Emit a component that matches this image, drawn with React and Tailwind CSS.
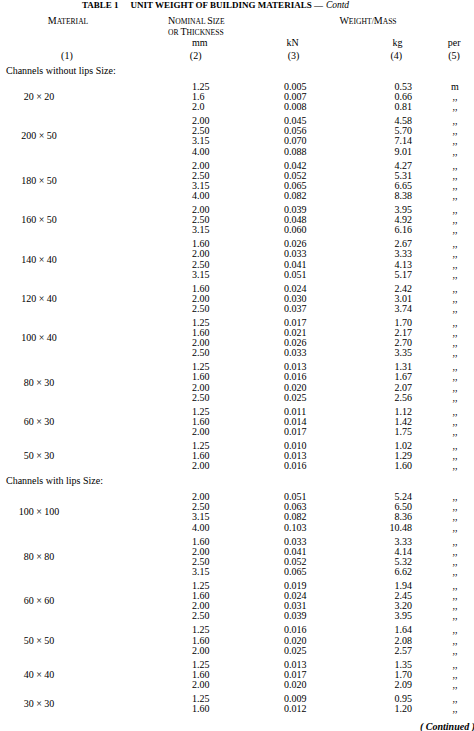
import React from "react";

const s1 = [
  ["20 × 20", [["1.25", "0.005", "0.53", "m"], ["1.6", "0.007", "0.66"], ["2.0", "0.008", "0.81"]]],
  ["200 × 50", [["2.00", "0.045", "4.58"], ["2.50", "0.056", "5.70"], ["3.15", "0.070", "7.14"], ["4.00", "0.088", "9.01"]]],
  ["180 × 50", [["2.00", "0.042", "4.27"], ["2.50", "0.052", "5.31"], ["3.15", "0.065", "6.65"], ["4.00", "0.082", "8.38"]]],
  ["160 × 50", [["2.00", "0.039", "3.95"], ["2.50", "0.048", "4.92"], ["3.15", "0.060", "6.16"]]],
  ["140 × 40", [["1.60", "0.026", "2.67"], ["2.00", "0.033", "3.33"], ["2.50", "0.041", "4.13"], ["3.15", "0.051", "5.17"]]],
  ["120 × 40", [["1.60", "0.024", "2.42"], ["2.00", "0.030", "3.01"], ["2.50", "0.037", "3.74"]]],
  ["100 × 40", [["1.25", "0.017", "1.70"], ["1.60", "0.021", "2.17"], ["2.00", "0.026", "2.70"], ["2.50", "0.033", "3.35"]]],
  ["80 × 30", [["1.25", "0.013", "1.31"], ["1.60", "0.016", "1.67"], ["2.00", "0.020", "2.07"], ["2.50", "0.025", "2.56"]]],
  ["60 × 30", [["1.25", "0.011", "1.12"], ["1.60", "0.014", "1.42"], ["2.00", "0.017", "1.75"]]],
  ["50 × 30", [["1.25", "0.010", "1.02"], ["1.60", "0.013", "1.29"], ["2.00", "0.016", "1.60"]]],
];

const s2 = [
  ["100 × 100", [["2.00", "0.051", "5.24"], ["2.50", "0.063", "6.50"], ["3.15", "0.082", "8.36"], ["4.00", "0.103", "10.48"]]],
  ["80 × 80", [["1.60", "0.033", "3.33"], ["2.00", "0.041", "4.14"], ["2.50", "0.052", "5.32"], ["3.15", "0.065", "6.62"]]],
  ["60 × 60", [["1.25", "0.019", "1.94"], ["1.60", "0.024", "2.45"], ["2.00", "0.031", "3.20"], ["2.50", "0.039", "3.95"]]],
  ["50 × 50", [["1.25", "0.016", "1.64"], ["1.60", "0.020", "2.08"], ["2.00", "0.025", "2.57"]]],
  ["40 × 40", [["1.25", "0.013", "1.35"], ["1.60", "0.017", "1.70"], ["2.00", "0.020", "2.09"]]],
  ["30 × 30", [["1.25", "0.009", "0.95"], ["1.60", "0.012", "1.20"]]],
];

function Group({ label, rows, first }) {
  return (
    <div className={`flex ${first ? "" : "mt-[4px]"}`}>
      <div className="w-[78px] flex items-center justify-center whitespace-nowrap">{label}</div>
      <div className="ml-[114px] flex flex-col">
        {rows.map((r, i) => (
          <div key={i} className="flex h-[10.1px] leading-[10.1px] whitespace-nowrap">
            <div className="w-[92px]">{r[0]}</div>
            <div className="w-[90px]">{r[1]}</div>
            <div className="w-[38px] text-right">{r[2]}</div>
            <div className="ml-[28px] w-[30px] text-center">{r[3] || ",,"}</div>
          </div>
        ))}
      </div>
    </div>
  );
}

function SC({ big, small }) {
  return (
    <span>
      {big}
      <span className="text-[7.6px]">{small}</span>
    </span>
  );
}

export default function App() {
  return (
    <div
      className="w-[474px] h-[731px] overflow-hidden bg-white text-black text-[10px] leading-[10px]"
      style={{ fontFamily: '"Liberation Serif", "Times New Roman", serif' }}
    >
      <div className="h-[10px] pl-[82px] whitespace-nowrap text-[9px] leading-[10px] font-bold">
        <span>TABLE 1</span>
        <span className="ml-[12px]">UNIT WEIGHT OF BUILDING MATERIALS —</span>
        <span className="ml-[3px] italic font-normal text-[9.5px]">Contd</span>
      </div>

      <div className="mt-[7px]">
        <div className="flex h-[10px] items-end whitespace-nowrap">
          <div className="w-[136px] text-center"><SC big="M" small="ATERIAL" /></div>
          <div className="ml-[32px] w-[140px]"><SC big="N" small="OMINAL " /><SC big="S" small="IZE" /></div>
          <div className="w-[120px] text-center"><SC big="W" small="EIGHT/" /><SC big="M" small="ASS" /></div>
        </div>
        <div className="flex h-[10.5px] items-end whitespace-nowrap">
          <div className="ml-[168px]"><SC big="" small="OR " /><SC big="T" small="HICKNESS" /></div>
        </div>
      </div>
      <div className="flex h-[10.5px] items-end whitespace-nowrap">
        <div className="ml-[180px] w-[40px] text-center">mm</div>
        <div className="ml-[53px] w-[40px] text-center">kN</div>
        <div className="ml-[65px] w-[40px] text-center">kg</div>
        <div className="ml-[17px] w-[40px] text-center">per</div>
      </div>
      <div className="mt-[3px] flex h-[10px] whitespace-nowrap">
        <div className="ml-[47px] w-[40px] text-center">(1)</div>
        <div className="ml-[89px] w-[40px] text-center">(2)</div>
        <div className="ml-[58px] w-[40px] text-center">(3)</div>
        <div className="ml-[63px] w-[40px] text-center">(4)</div>
        <div className="ml-[18px] w-[40px] text-center">(5)</div>
      </div>

      <div className="mt-[5px] h-[10px] pl-[6px] whitespace-nowrap">Channels without lips Size:</div>
      <div className="mt-[6px]">
        {s1.map(([l, r], i) => (
          <Group key={l} label={l} rows={r} first={i === 0} />
        ))}
      </div>

      <div className="mt-[5px] h-[10px] pl-[6px] whitespace-nowrap">Channels with lips Size:</div>
      <div className="mt-[6px]">
        {s2.map(([l, r], i) => (
          <Group key={l} label={l} rows={r} first={i === 0} />
        ))}
      </div>

      <div className="mt-[8px] h-[10px] pl-[420px] whitespace-nowrap italic font-bold">( Continued )</div>
    </div>
  );
}
